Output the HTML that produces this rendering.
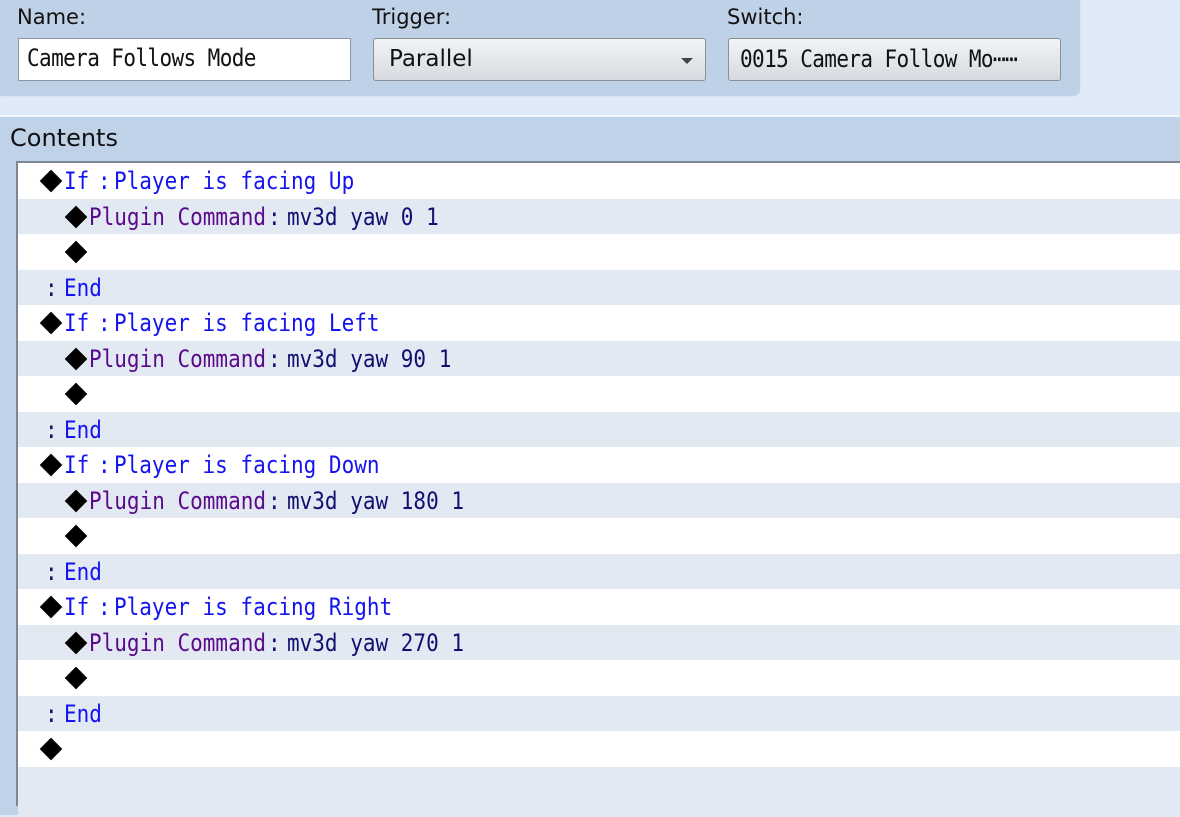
<!DOCTYPE html>
<html><head><meta charset="utf-8"><style>
*{margin:0;padding:0;box-sizing:border-box}
body{width:1180px;height:800px;overflow:hidden;background:#dfeaf8;position:relative;font-family:"DejaVu Sans","Liberation Sans",sans-serif}
.top{position:absolute;left:-6px;top:-10px;width:1087px;height:107px;background:#bed1e6;border:1px solid #d8e4f2;border-radius:0 0 8px 8px}
.lbl{position:absolute;top:5px;font-size:21px;color:#111}
.inp{position:absolute;top:38px;height:43px;background:#fff;border:1px solid #8a96a6;font-family:"DejaVu Sans Mono",monospace;font-size:21px;padding:7px 8px;color:#111;letter-spacing:-0.6px}
.btn{position:absolute;top:38px;height:43px;border:1px solid #8a8f98;border-radius:3px;background:linear-gradient(#f2f4f6,#d6dae0);font-size:23px;padding:7px 15px;color:#111}
.tall{display:inline-block;transform:scaleY(1.15)}
.cont{position:absolute;left:-6px;top:115px;width:1200px;height:700px;background:#bfd2e8;border-top:2px solid #f2f7fd;border-left:2px solid #f2f7fd;border-radius:8px 0 0 0}
.ctl{position:absolute;left:10px;top:124px;font-size:24px;color:#111}
.list{position:absolute;left:16px;top:161px;width:1170px;height:645px;background:#fff;border-top:2px solid #7d8794;border-left:2px solid #7d8794}
.row{position:absolute;left:0;width:1170px;height:35.5px;font-family:"DejaVu Sans Mono",monospace;font-size:21px;white-space:pre}
.row span{position:absolute;top:5px;transform:scaleY(1.15);transform-origin:50% 50%;line-height:26px}
.row i{position:absolute;top:10px;width:16px;height:16px;background:#000;transform:rotate(45deg)}
.alt{background:#e2e9f2}
.b{color:#1414f0}.p{color:#5a0a8a}.n{color:#101070}
</style></head><body>
<div class="top"></div>
<div class="lbl" style="left:17px">Name:</div>
<div class="lbl" style="left:372px">Trigger:</div>
<div class="lbl" style="left:727px">Switch:</div>
<div class="inp" style="left:18px;width:333px"><span class="tall">Camera Follows Mode</span></div>
<div class="btn" style="left:373px;width:333px">Parallel<span style="position:absolute;right:12px;top:19px;width:0;height:0;border-left:6px solid transparent;border-right:6px solid transparent;border-top:6px solid #444"></span></div>
<div class="btn" style="left:728px;width:333px;font-family:'DejaVu Sans Mono',monospace;font-size:21px;letter-spacing:-0.6px;padding:8px 11px"><span class="tall">0015 Camera Follow Mo⋯⋯</span></div>
<div class="cont"></div>
<div class="ctl">Contents</div>
<div class="list">
<div class="row" style="top:0"><i style="left:25px"></i><span class="b" style="left:46px">If</span><span class="b" style="left:80px">:</span><span class="b" style="left:96px">Player is facing Up</span></div>
<div class="row alt" style="top:35.5px"><i style="left:50px"></i><span class="p" style="left:71px">Plugin Command</span><span class="n" style="left:250px">:</span><span class="n" style="left:269px">mv3d yaw 0 1</span></div>
<div class="row" style="top:71px"><i style="left:50px"></i></div>
<div class="row alt" style="top:106.5px"><span class="n" style="left:27px">:</span><span class="b" style="left:46px">End</span></div>
<div class="row" style="top:142px"><i style="left:25px"></i><span class="b" style="left:46px">If</span><span class="b" style="left:80px">:</span><span class="b" style="left:96px">Player is facing Left</span></div>
<div class="row alt" style="top:177.5px"><i style="left:50px"></i><span class="p" style="left:71px">Plugin Command</span><span class="n" style="left:250px">:</span><span class="n" style="left:269px">mv3d yaw 90 1</span></div>
<div class="row" style="top:213px"><i style="left:50px"></i></div>
<div class="row alt" style="top:248.5px"><span class="n" style="left:27px">:</span><span class="b" style="left:46px">End</span></div>
<div class="row" style="top:284px"><i style="left:25px"></i><span class="b" style="left:46px">If</span><span class="b" style="left:80px">:</span><span class="b" style="left:96px">Player is facing Down</span></div>
<div class="row alt" style="top:319.5px"><i style="left:50px"></i><span class="p" style="left:71px">Plugin Command</span><span class="n" style="left:250px">:</span><span class="n" style="left:269px">mv3d yaw 180 1</span></div>
<div class="row" style="top:355px"><i style="left:50px"></i></div>
<div class="row alt" style="top:390.5px"><span class="n" style="left:27px">:</span><span class="b" style="left:46px">End</span></div>
<div class="row" style="top:426px"><i style="left:25px"></i><span class="b" style="left:46px">If</span><span class="b" style="left:80px">:</span><span class="b" style="left:96px">Player is facing Right</span></div>
<div class="row alt" style="top:461.5px"><i style="left:50px"></i><span class="p" style="left:71px">Plugin Command</span><span class="n" style="left:250px">:</span><span class="n" style="left:269px">mv3d yaw 270 1</span></div>
<div class="row" style="top:497px"><i style="left:50px"></i></div>
<div class="row alt" style="top:532.5px"><span class="n" style="left:27px">:</span><span class="b" style="left:46px">End</span></div>
<div class="row" style="top:568px"><i style="left:25px"></i></div>
<div class="row alt" style="top:603.5px;height:50px"></div>
</div>
</body></html>
